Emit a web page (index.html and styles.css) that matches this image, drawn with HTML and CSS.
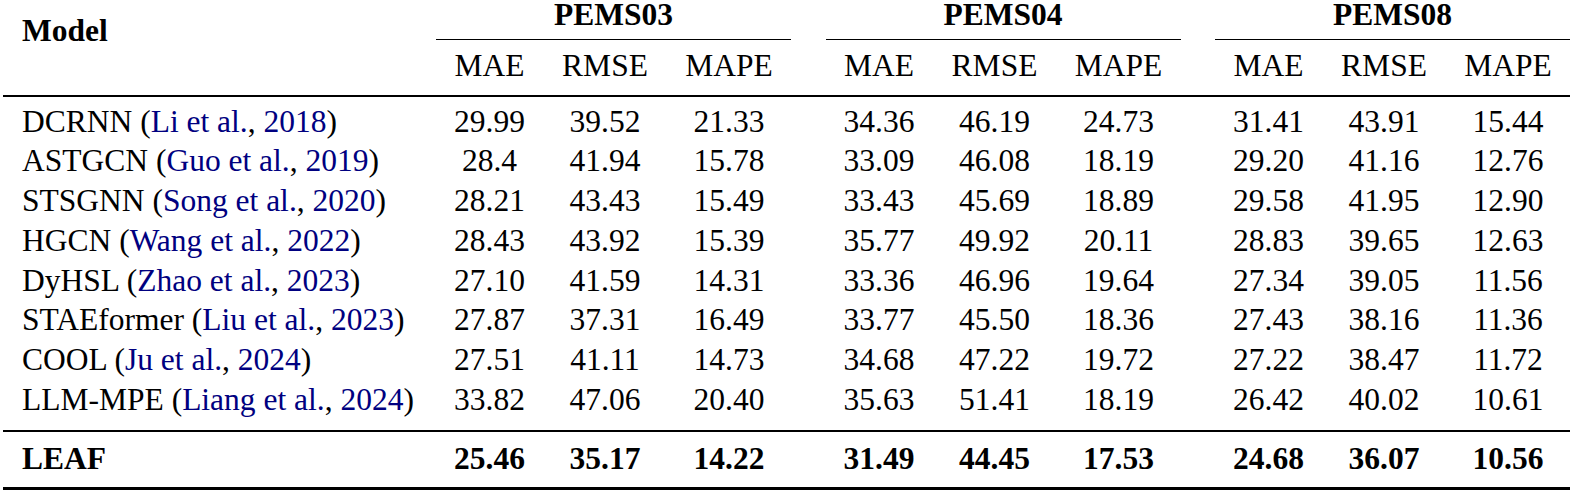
FILE: index.html
```html
<!DOCTYPE html>
<html lang="en">
<head>
    <meta charset="UTF-8">
    <title>Traffic forecasting results</title>
    <link rel="stylesheet" href="styles.css">
</head>
<body>
<div class="table">
    <div class="head row">
        <div class="model">Model</div>
        <div class="group">
            <div class="title">PEMS03</div>
            <div class="cells metrics"><span>MAE</span><span>RMSE</span><span>MAPE</span></div>
        </div>
        <div class="group">
            <div class="title">PEMS04</div>
            <div class="cells metrics"><span>MAE</span><span>RMSE</span><span>MAPE</span></div>
        </div>
        <div class="group">
            <div class="title">PEMS08</div>
            <div class="cells metrics"><span>MAE</span><span>RMSE</span><span>MAPE</span></div>
        </div>
    </div>
    <div class="body">
        <div class="row">
            <div class="name">DCRNN (<span class="cite">Li et al.</span>, <span class="cite">2018</span>)</div>
            <div class="cells"><span>29.99</span><span>39.52</span><span>21.33</span></div>
            <div class="cells"><span>34.36</span><span>46.19</span><span>24.73</span></div>
            <div class="cells"><span>31.41</span><span>43.91</span><span>15.44</span></div>
        </div>
        <div class="row">
            <div class="name">ASTGCN (<span class="cite">Guo et al.</span>, <span class="cite">2019</span>)</div>
            <div class="cells"><span>28.4</span><span>41.94</span><span>15.78</span></div>
            <div class="cells"><span>33.09</span><span>46.08</span><span>18.19</span></div>
            <div class="cells"><span>29.20</span><span>41.16</span><span>12.76</span></div>
        </div>
        <div class="row">
            <div class="name">STSGNN (<span class="cite">Song et al.</span>, <span class="cite">2020</span>)</div>
            <div class="cells"><span>28.21</span><span>43.43</span><span>15.49</span></div>
            <div class="cells"><span>33.43</span><span>45.69</span><span>18.89</span></div>
            <div class="cells"><span>29.58</span><span>41.95</span><span>12.90</span></div>
        </div>
        <div class="row">
            <div class="name">HGCN (<span class="cite">Wang et al.</span>, <span class="cite">2022</span>)</div>
            <div class="cells"><span>28.43</span><span>43.92</span><span>15.39</span></div>
            <div class="cells"><span>35.77</span><span>49.92</span><span>20.11</span></div>
            <div class="cells"><span>28.83</span><span>39.65</span><span>12.63</span></div>
        </div>
        <div class="row">
            <div class="name">DyHSL (<span class="cite">Zhao et al.</span>, <span class="cite">2023</span>)</div>
            <div class="cells"><span>27.10</span><span>41.59</span><span>14.31</span></div>
            <div class="cells"><span>33.36</span><span>46.96</span><span>19.64</span></div>
            <div class="cells"><span>27.34</span><span>39.05</span><span>11.56</span></div>
        </div>
        <div class="row">
            <div class="name">STAEformer (<span class="cite">Liu et al.</span>, <span class="cite">2023</span>)</div>
            <div class="cells"><span>27.87</span><span>37.31</span><span>16.49</span></div>
            <div class="cells"><span>33.77</span><span>45.50</span><span>18.36</span></div>
            <div class="cells"><span>27.43</span><span>38.16</span><span>11.36</span></div>
        </div>
        <div class="row">
            <div class="name">COOL (<span class="cite">Ju et al.</span>, <span class="cite">2024</span>)</div>
            <div class="cells"><span>27.51</span><span>41.11</span><span>14.73</span></div>
            <div class="cells"><span>34.68</span><span>47.22</span><span>19.72</span></div>
            <div class="cells"><span>27.22</span><span>38.47</span><span>11.72</span></div>
        </div>
        <div class="row">
            <div class="name">LLM-MPE (<span class="cite">Liang et al.</span>, <span class="cite">2024</span>)</div>
            <div class="cells"><span>33.82</span><span>47.06</span><span>20.40</span></div>
            <div class="cells"><span>35.63</span><span>51.41</span><span>18.19</span></div>
            <div class="cells"><span>26.42</span><span>40.02</span><span>10.61</span></div>
        </div>
    </div>
    <div class="row best">
        <div class="name">LEAF</div>
        <div class="cells"><span>25.46</span><span>35.17</span><span>14.22</span></div>
        <div class="cells"><span>31.49</span><span>44.45</span><span>17.53</span></div>
        <div class="cells"><span>24.68</span><span>36.07</span><span>10.56</span></div>
    </div>
</div>
</body>
</html>
```

FILE: styles.css
```css
*{
    margin:0;
    padding:0;
    box-sizing: border-box;
}
body{
    background: #fff;
    color: #000;
    font-family: 'Liberation Serif', 'Times New Roman', Times, 'Noto Serif', 'Noto Serif CJK SC', FreeSerif, serif;
    font-size: 31.5px;
    padding: 0 3px;
}
.table{
    width: 1567px;
}
/* first column + three dataset groups, 34.5px apart */
.row{
    display: grid;
    grid-template-columns: 398.5px 355px 355px 355px;
    column-gap: 34.5px;
    line-height: 39.75px;
}
.cells{
    display: grid;
    grid-template-columns: 107px 124px 124px;
    text-align: center;
    white-space: nowrap;
}
.name{
    padding-left: 19px;
    white-space: nowrap;
}
.cite{
    color: #000080;
}

/* header: two lines, with cmidrules under the dataset names */
.head{
    height: 97px;
    border-bottom: 2px solid #000;
}
.model{
    font-weight: bold;
    padding-left: 19px;
    padding-top: 13px;
    line-height: 36px;
    white-space: nowrap;
}
.group .title{
    height: 40px;
    line-height: 30px;
    font-weight: bold;
    text-align: center;
    border-bottom: 1px solid #000;
}
.metrics{
    height: 55px;
    line-height: 51px;
}

.body{
    padding: 4.5px 0 10.5px;
    border-bottom: 2px solid #000;
}

.best{
    font-weight: bold;
    line-height: 53px;
    padding-bottom: 2px;
    border-bottom: 3px solid #000;
}
```
